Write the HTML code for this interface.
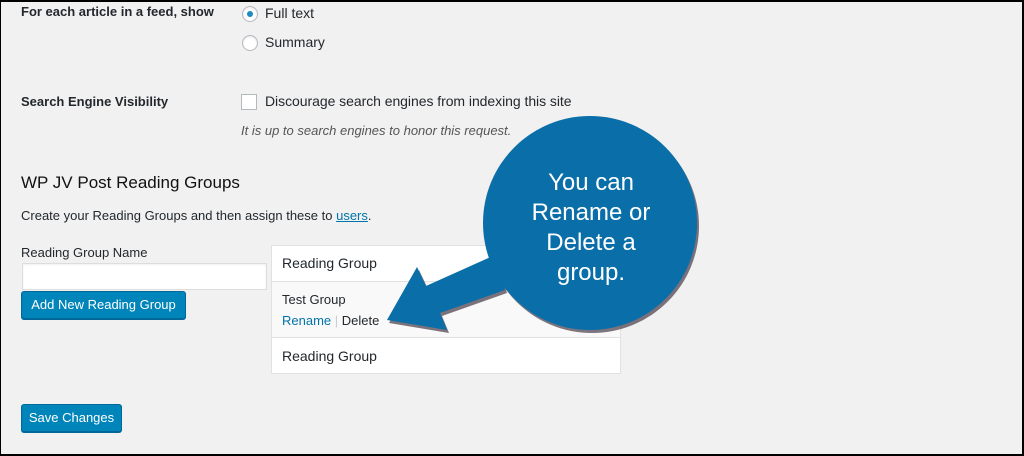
<!DOCTYPE html>
<html><head><meta charset="utf-8"><style>
*{margin:0;padding:0;box-sizing:border-box}
body{width:1024px;height:456px;background:#000;position:relative;overflow:hidden;font-family:"Liberation Sans",sans-serif;color:#23282d;font-size:13px}
#bg{position:absolute;left:1px;top:2px;width:1021px;height:452px;background:#f1f1f1}
.a{position:absolute;white-space:nowrap}
.radio{position:absolute;width:16px;height:16px;border:1px solid #b4b9be;border-radius:50%;background:#fff;box-shadow:inset 0 1px 2px rgba(0,0,0,.1)}
.btn{position:absolute;background:#0085ba;border:1px solid #006799;border-radius:3px;color:#fff;font-size:13px;line-height:26px;text-align:center;box-shadow:0 1px 0 #006799}
.row{position:absolute;left:271px;width:350px;border:1px solid #e1e1e1;background:#fff}
</style></head><body>
<div id="bg"></div>
<div class="a" style="left:21px;top:4px;font-weight:bold;font-size:13px">For each article in a feed, show</div>
<div class="radio" style="left:242px;top:6px"></div>
<div class="a" style="left:247px;top:11px;width:6px;height:6px;border-radius:50%;background:#1e8cbe"></div>
<div class="a" style="left:265px;top:5px;font-size:14px">Full text</div>
<div class="radio" style="left:242px;top:35px"></div>
<div class="a" style="left:265px;top:34px;font-size:14px">Summary</div>
<div class="a" style="left:21px;top:94px;font-weight:bold">Search Engine Visibility</div>
<div class="a" style="left:241px;top:94px;width:16px;height:16px;border:1px solid #b4b9be;background:#fff"></div>
<div class="a" style="left:265px;top:93px;font-size:14px;letter-spacing:-0.05px">Discourage search engines from indexing this site</div>
<div class="a" style="left:241px;top:123px;font-style:italic;color:#555;font-size:13px">It is up to search engines to honor this request.</div>
<div class="a" style="left:21px;top:173px;font-size:17px;color:#111">WP JV Post Reading Groups</div>
<div class="a" style="left:21px;top:208px;font-size:13px">Create your Reading Groups and then assign these to <span style="color:#0073aa;text-decoration:underline">users</span>.</div>
<div class="a" style="left:21px;top:245px;font-size:13px">Reading Group Name</div>
<div class="a" style="left:22px;top:263px;width:245px;height:27px;background:#fff;border:1px solid #ddd;box-shadow:inset 0 1px 2px rgba(0,0,0,.07)"></div>
<div class="btn" style="left:21px;top:291px;width:165px;height:28px">Add New Reading Group</div>
<div class="row" style="top:245px;height:37px"><div class="a" style="left:10px;top:9px;font-size:14px">Reading Group</div></div>
<div class="row" style="top:281px;height:57px;background:#f9f9f9"><div class="a" style="left:10px;top:10px;font-size:13px">Test Group</div><div class="a" style="left:10px;top:31px;font-size:13px"><span style="color:#0073aa">Rename</span> <span style="color:#ccc">|</span> Delete</div></div>
<div class="row" style="top:337px;height:37px"><div class="a" style="left:10px;top:10px;font-size:14px">Reading Group</div></div>
<div class="btn" style="left:21px;top:404px;width:101px;height:28px">Save Changes</div>
<svg class="a" style="left:0;top:0" width="1024" height="456">
<g fill="#2a1a2a" opacity=".6" transform="translate(2,3)">
<circle cx="590" cy="223" r="107"/>
<polygon points="387,320 417,267 426,286 495,255 505,290 440,313 447,330"/>
</g>
<g fill="#0a6ea8">
<circle cx="590" cy="223" r="107"/>
<polygon points="387,320 417,267 426,286 495,255 505,290 440,313 447,330"/>
</g>
<g fill="#fff" font-family="Liberation Sans,sans-serif" font-size="24" text-anchor="middle">
<text x="591" y="190">You can</text>
<text x="591" y="220">Rename or</text>
<text x="591" y="250">Delete a</text>
<text x="591" y="280">group.</text>
</g>
</svg>
</body></html>
